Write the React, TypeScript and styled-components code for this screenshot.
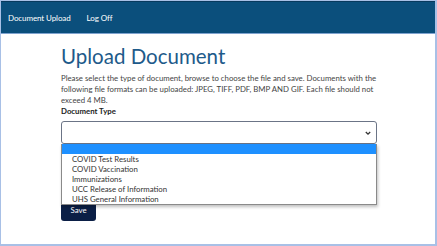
import styled, { createGlobalStyle } from "styled-components";

const GlobalStyle = createGlobalStyle`
  html, body {
    margin: 0;
    padding: 0;
    background: #ffffff;
  }
  body {
    font-family: Lato, "Open Sans", "Liberation Sans", sans-serif;
  }
`;

const options = [
  "COVID Test Results",
  "COVID Vaccination",
  "Immunizations",
  "UCC Release of Information",
  "UHS General Information",
];

export default function App() {
  return (
    <>
      <GlobalStyle />
      <Frame>
        <NavBar>
          <NavLink>Document Upload</NavLink>
          <NavLink>Log Off</NavLink>
        </NavBar>
        <Main>
          <Title>Upload Document</Title>
          <Intro>
            Please select the type of document, browse to choose the file and save. Documents with the
            following file formats can be uploaded: JPEG, TIFF, PDF, BMP AND GIF. Each file should not
            exceed 4 MB.
          </Intro>
          <FieldLabel>Document Type</FieldLabel>
          <SelectWrap>
            <SelectBox>
              <Chevron viewBox="0 0 8 8">
                <path d="M1.8 3 L4 5.2 L6.2 3" fill="none" stroke="#333" strokeWidth="1.3" />
              </Chevron>
            </SelectBox>
            <OptionList>
              <OptionRow $active />
              {options.map((o) => (
                <OptionRow key={o}>{o}</OptionRow>
              ))}
            </OptionList>
          </SelectWrap>
          <SaveButton>Save</SaveButton>
        </Main>
      </Frame>
    </>
  );
}

const Frame = styled.div`
  box-sizing: border-box;
  width: 437px;
  height: 246px;
  border: 1px solid #a8c0e6;
  border-width: 1px 2px 2px 1px;
  overflow: hidden;
  background: #fff;
`;

const NavBar = styled.div`
  display: flex;
  align-items: center;
  gap: 16px;
  height: 31px;
  padding: 0 7px;
  background: #0b4f7c;
  border-top: 1px solid #083a5e;
  border-bottom: 1px solid #7fa3cf;
`;

const NavLink = styled.span`
  color: #ffffff;
  font-size: 8px;
  letter-spacing: -0.1px;
`;

const Main = styled.div`
  width: 316px;
  margin: 0 0 0 60px;
  padding-top: 10px;
`;

const Title = styled.h1`
  margin: 0;
  font-weight: 400;
  font-size: 20.5px;
  line-height: 24px;
  color: #1d5a8a;
`;

const Intro = styled.p`
  margin: 4.5px 0 0;
  font-size: 7.8px;
  line-height: 11px;
  color: #444;
`;

const FieldLabel = styled.div`
  font-size: 7.8px;
  font-weight: 700;
  line-height: 11px;
  color: #222;
`;

const SelectWrap = styled.div`
  position: relative;
  margin-top: 4.5px;
`;

const SelectBox = styled.div`
  box-sizing: border-box;
  height: 23px;
  border: 1px solid #6b7486;
  border-radius: 3px;
  display: flex;
  align-items: center;
  justify-content: flex-end;
  padding-right: 4px;
  background: #fff;
`;

const Chevron = styled.svg`
  width: 8px;
  height: 8px;
`;

const OptionList = styled.div`
  position: absolute;
  left: 0;
  right: 0;
  top: 23px;
  background: #fff;
  border: 1px solid #8a8a8a;
  border-top: none;
  box-shadow: 1px 2px 3px rgba(0, 0, 0, 0.25);
  z-index: 2;
`;

const OptionRow = styled.div<{ $active?: boolean }>`
  height: 10px;
  line-height: 10px;
  padding-left: 10px;
  font-size: 7.8px;
  color: #333;
  background: ${(p) => (p.$active ? "#1e90ff" : "transparent")};
  white-space: nowrap;
`;

const SaveButton = styled.button`
  display: block;
  margin-top: 55px;
  width: 35px;
  height: 22px;
  padding: 0;
  border: none;
  border-radius: 3px;
  background: #0b1f46;
  color: #fff;
  font-family: inherit;
  font-size: 7.8px;
`;
